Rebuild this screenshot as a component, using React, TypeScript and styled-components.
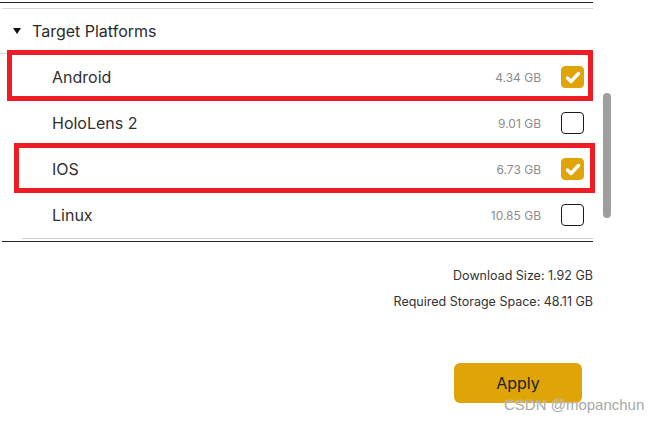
import React, { useState } from 'react';
import styled, { createGlobalStyle } from 'styled-components';

const GlobalStyle = createGlobalStyle`
  body {
    margin: 0;
    padding: 0;
    background: #ffffff;
    font-family: Inter, "Noto Sans", sans-serif;
  }
`;

const Page = styled.div`
  position: relative;
  width: 649px;
  height: 423px;
  overflow: hidden;
`;

const Panel = styled.div`
  width: 593px;
  padding-top: 2px;
`;

const Rule = styled.div<{ $color: string; $indent?: number; $gap?: number }>`
  height: 1px;
  background: ${(p) => p.$color};
  margin-left: ${(p) => p.$indent ?? 0}px;
  margin-top: ${(p) => p.$gap ?? 0}px;
`;

const SectionHeader = styled.div`
  display: flex;
  align-items: center;
  gap: 11px;
  height: 44px;
  padding-left: 13px;
  border-bottom: 1px solid #dcdcdc;
  color: #2b2b2b;
  font-size: 16px;
`;

const ListArea = styled.div`
  display: flex;
  width: 620px;
`;

const List = styled.div`
  width: 593px;
  flex-shrink: 0;
`;

const Row = styled.div`
  display: flex;
  align-items: center;
  height: 46px;
  padding: 0 9px 0 52px;
`;

const Label = styled.span`
  flex: 1;
  font-size: 16px;
  color: #303030;
`;

const Size = styled.span`
  font-size: 12px;
  color: #8c8c8c;
  margin-right: 20px;
`;

const Box = styled.button<{ $checked: boolean }>`
  display: flex;
  align-items: center;
  justify-content: center;
  width: 23px;
  height: 22px;
  padding: 0;
  border-radius: 4px;
  border: 1px solid ${(p) => (p.$checked ? '#e0a409' : '#1a1a1a')};
  background: ${(p) => (p.$checked ? '#e0a409' : '#ffffff')};
  cursor: pointer;
`;

const ScrollTrack = styled.div`
  margin-left: 10px;
  padding-top: 39px;
`;

const Thumb = styled.div`
  width: 8px;
  height: 125px;
  border-radius: 4px;
  background: #9e9e9e;
`;

const Summary = styled.div`
  display: flex;
  flex-direction: column;
  align-items: flex-end;
  gap: 11px;
  padding-top: 26px;
  font-size: 12.5px;
  color: #333333;
`;

const Actions = styled.div`
  display: flex;
  justify-content: flex-end;
  padding: 54px 11px 0 0;
`;

const ApplyButton = styled.button`
  width: 128px;
  height: 40px;
  border: none;
  border-radius: 6px;
  background: #dfa508;
  color: #222222;
  font-family: Inter, "Noto Sans", sans-serif;
  font-size: 16px;
  cursor: pointer;
`;

const Highlight = styled.div<{ $left: number; $top: number; $width: number; $height: number }>`
  position: absolute;
  left: ${(p) => p.$left}px;
  top: ${(p) => p.$top}px;
  width: ${(p) => p.$width}px;
  height: ${(p) => p.$height}px;
  border: 5px solid #ee1c25;
  box-sizing: border-box;
  pointer-events: none;
`;

const Watermark = styled.div`
  position: absolute;
  left: 504px;
  top: 396px;
  font-family: "Liberation Sans", Arial, sans-serif;
  font-size: 15px;
  color: #a8a8a8;
  text-shadow: 0 0 1px #ffffff;
  pointer-events: none;
`;

type Platform = { name: string; size: string };

const platforms: Platform[] = [
  { name: 'Android', size: '4.34 GB' },
  { name: 'HoloLens 2', size: '9.01 GB' },
  { name: 'IOS', size: '6.73 GB' },
  { name: 'Linux', size: '10.85 GB' },
];

const Check = () => (
  <svg width="16" height="13" viewBox="0 0 16 13">
    <path d="M2.5 7 L6 10.5 L13.5 2.5" fill="none" stroke="#fff" strokeWidth="3.4" strokeLinecap="round" strokeLinejoin="round" />
  </svg>
);

const App = () => {
  const [selected, setSelected] = useState<string[]>(['Android', 'IOS']);

  const toggle = (name: string) => {
    setSelected(selected.includes(name) ? selected.filter((n) => n !== name) : [...selected, name]);
  };

  return (
    <Page>
      <GlobalStyle />
      <Panel>
        <Rule $color="#222" />
        <Rule $color="#d6d6d6" $indent={2} $gap={5} />
        <SectionHeader>
          <svg width="8" height="6" viewBox="0 0 8 6">
            <path d="M0 0 H8 L4 6 Z" fill="#111" />
          </svg>
          Target Platforms
        </SectionHeader>
        <ListArea>
          <List>
            {platforms.map((p) => {
              const checked = selected.includes(p.name);
              return (
                <Row key={p.name}>
                  <Label>{p.name}</Label>
                  <Size>{p.size}</Size>
                  <Box $checked={checked} onClick={() => toggle(p.name)}>
                    {checked && <Check />}
                  </Box>
                </Row>
              );
            })}
          </List>
          <ScrollTrack>
            <Thumb />
          </ScrollTrack>
        </ListArea>
        <Rule $color="#cfcfcf" $indent={22} />
        <Rule $color="#222" $indent={2} $gap={2} />
        <Summary>
          <span>Download Size: 1.92 GB</span>
          <span>Required Storage Space: 48.11 GB</span>
        </Summary>
        <Actions>
          <ApplyButton>Apply</ApplyButton>
        </Actions>
      </Panel>
      <Highlight $left={7} $top={50} $width={586} $height={51} />
      <Highlight $left={14} $top={143} $width={581} $height={50} />
      <Watermark>CSDN @mopanchun</Watermark>
    </Page>
  );
};

export default App;
